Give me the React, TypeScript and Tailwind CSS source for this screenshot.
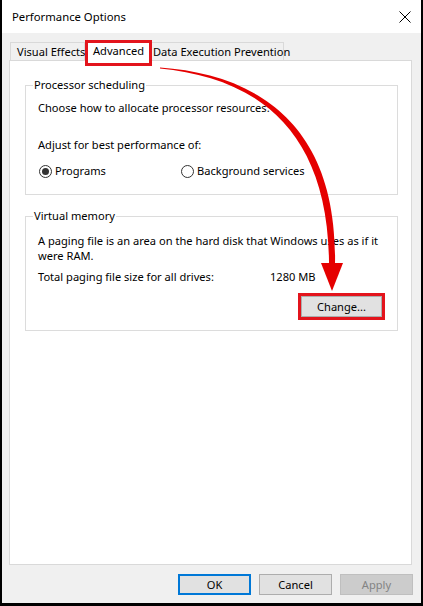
import React from 'react';

const font = { fontFamily: '"Segoe UI", "Noto Sans", "Open Sans", sans-serif' };

const Radio = ({ checked, label }: { checked?: boolean; label: string }) => (
  <label className="flex items-center gap-[3px]">
    <span className="w-[13px] h-[13px] rounded-full border border-[#333] bg-white flex items-center justify-center">
      {checked && <span className="w-[7px] h-[7px] rounded-full bg-[#333]" />}
    </span>
    <span>{label}</span>
  </label>
);

const Group = ({ title, children, className }: { title: string; children: React.ReactNode; className?: string }) => (
  <fieldset className={`border border-[#dcdcdc] pl-[12px] pr-[12px] ${className ?? ''}`}>
    <legend className="ml-[-5px] px-[1px] leading-[16px]">{title}</legend>
    {children}
  </fieldset>
);

export default function App() {
  return (
    <div className="relative w-[423px] h-[606px] bg-black pl-[2px] pr-[2px] pb-[3px] text-[11.1px] text-black whitespace-nowrap" style={font}>
      <div className="h-full bg-[#f0f0f0] flex flex-col">
        {/* Title bar */}
        <div className="h-[33px] bg-white flex items-center justify-between pl-[10px] pr-[10px] shrink-0">
          <span className="leading-[16px] text-[11.3px]">Performance Options</span>
          <svg width="12" height="12" viewBox="0 0 12 12">
            <path d="M0.5 0.5 L11.5 11.5 M11.5 0.5 L0.5 11.5" stroke="#000" strokeWidth="1" />
          </svg>
        </div>

        {/* Tabs */}
        <div className="mt-[7px] ml-[8px] h-[20px] flex items-end shrink-0">
          <div className="h-[18px] w-[75px] border border-b-0 border-[#d9d9d9] bg-[#f0f0f0] flex items-center pl-[6px] leading-[16px]">
            Visual Effects
          </div>
          <div className="relative z-10 h-[26px] w-[67px] mb-[-6px] border-[3px] border-[#e3141c] bg-white pl-[5px] leading-[16px]">
            Advanced
          </div>
          <div className="h-[18px] w-[132px] border border-b-0 border-l-0 border-[#d9d9d9] bg-[#f0f0f0] flex items-center pl-[1px] leading-[16px]">
            Data Execution Prevention
          </div>
        </div>

        {/* Panel */}
        <div className="ml-[7px] mr-[9px] h-[505px] bg-white border border-[#d9d9d9] shrink-0 pl-[15px] pr-[13px] pt-[16px]">
          <Group title="Processor scheduling" className="pt-[7px] pb-[15px]">
            <div className="leading-[16px]">Choose how to allocate processor resources.</div>
            <div className="leading-[16px] mt-[21px]">Adjust for best performance of:</div>
            <div className="flex leading-[16px] mt-[10px] pl-[1px]">
              <div className="w-[142px]">
                <Radio checked label="Programs" />
              </div>
              <Radio label="Background services" />
            </div>
          </Group>

          <Group title="Virtual memory" className="mt-[13px] pt-[9px] pb-[10px]">
            <div className="leading-[15px]">
              A paging file is an area on the hard disk that Windows uses as if it
              <br />
              were RAM.
            </div>
            <div className="flex leading-[15px] mt-[6px]">
              <span className="w-[232px]">Total paging file size for all drives:</span>
              <span>1280 MB</span>
            </div>
            <div className="flex justify-end mt-[9px]">
              <div className="border-[3px] border-[#e3141c] w-[87px] h-[27px]">
                <button className="w-full h-full bg-[#e1e1e1] border border-[#adadad] leading-[16px]">
                  Change...
                </button>
              </div>
            </div>
          </Group>
        </div>

        {/* Buttons */}
        <div className="flex justify-end gap-[8px] mt-[9px] mr-[8px]">
          <button className="w-[73px] h-[21px] bg-[#e1e1e1] border-2 border-[#0078d7] leading-[16px]">OK</button>
          <button className="w-[73px] h-[21px] bg-[#e1e1e1] border border-[#adadad] leading-[16px]">Cancel</button>
          <button className="w-[73px] h-[21px] bg-[#cccccc] border border-[#bfbfbf] text-[#838383] leading-[16px]">Apply</button>
        </div>
      </div>

      {/* Annotation arrow */}
      <svg className="absolute inset-0 pointer-events-none z-20" width="423" height="606" viewBox="0 0 423 606">
        <path
          d="M160 67.6 C250 74 338 118 335 265 L329 265 C329 124 250 77 160 68.4 Z"
          fill="#e50000"
        />
        <path d="M321 263 L343 263 L332 291 Z" fill="#e50000" />
      </svg>
    </div>
  );
}
